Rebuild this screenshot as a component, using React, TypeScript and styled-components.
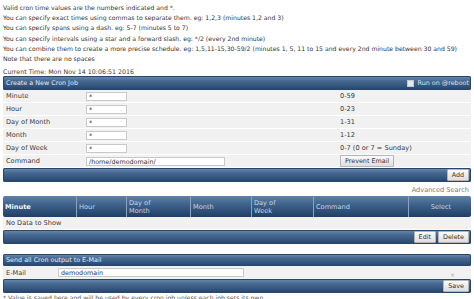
import React from "react";
import styled, { createGlobalStyle } from "styled-components";

const GlobalStyle = createGlobalStyle`
  html, body {
    margin: 0;
    padding: 0;
    background: #ffffff;
  }
  body {
    font-family: "DejaVu Sans", Verdana, sans-serif;
    font-size: 6.6px;
    color: #3a3a3a;
    -webkit-font-smoothing: antialiased;
  }
`;

const Page = styled.div`
  padding: 3px 3px 0 3px;
  width: 468px;
  height: 296px;
  overflow: hidden;
`;

const Notes = styled.div`
  font-size: 6.15px;
  line-height: 10.2px;
  margin-bottom: 3px;
  white-space: nowrap;
  color: #333;
`;

const CurrentTime = styled.div`
  font-size: 6.3px;
  line-height: 9px;
`;

const Bar = styled.div<{ $h?: number }>`
  display: flex;
  align-items: center;
  justify-content: space-between;
  height: ${(p) => p.$h ?? 14}px;
  padding: 0 2px 0 3px;
  color: #e3ebf4;
  border-radius: 2px;
  background: linear-gradient(
    #6c8db3 0%,
    #46688f 35%,
    #3a5c84 60%,
    #23426a 100%
  );
  box-shadow: inset 0 0 0 1px #2a466b;
`;

const BarTitle = styled.span`
  font-size: 6.4px;
`;

const Reboot = styled.label`
  display: flex;
  align-items: center;
  gap: 4px;
  font-size: 6.4px;
  color: #d7e2ee;
`;

const Check = styled.span`
  width: 5px;
  height: 5px;
  background: #e8e8e8;
  border: 1px solid #c8c8c8;
`;

const FormTable = styled.div`
  display: grid;
  grid-template-columns: 80px 254px 1fr;
`;

const Cell = styled.div`
  display: flex;
  align-items: center;
  height: 12px;
  padding-left: 3px;
  background: #f1f1f1;
  border-bottom: 1px solid #ffffff;
`;

const Field = styled.div<{ $w: number }>`
  width: ${(p) => p.$w}px;
  height: 9px;
  background: #ffffff;
  border: 1px solid #c9c9c9;
  line-height: 8px;
  padding-left: 2px;
  box-sizing: border-box;
  color: #333;
  font-size: 6.4px;
`;

const Btn = styled.span`
  display: inline-flex;
  align-items: center;
  justify-content: center;
  height: 10px;
  padding: 0 4px;
  font-size: 6.4px;
  color: #333;
  background: linear-gradient(#fafafa, #dedede);
  border: 1px solid #b5b5b5;
  border-radius: 1px;
`;

const BtnGroup = styled.div`
  display: flex;
  gap: 2px;
`;

const Advanced = styled.div`
  text-align: right;
  color: #7a7a7a;
  padding: 4px 2px 0 0;
  height: 9px;
  line-height: 9px;
  margin-bottom: 1px;
`;

const JobsHead = styled.div`
  display: grid;
  grid-template-columns: 74px 50px 64px 61px 62px 95px 1fr;
  height: 21px;
  border-radius: 2px;
  overflow: hidden;
`;

const HeadCell = styled.div<{ $bold?: boolean; $center?: boolean }>`
  display: flex;
  align-items: center;
  justify-content: ${(p) => (p.$center ? "center" : "flex-start")};
  padding-left: 2px;
  line-height: 8px;
  color: ${(p) => (p.$bold ? "#f2f6fa" : "#c9d7e6")};
  font-weight: ${(p) => (p.$bold ? "bold" : "normal")};
  background: linear-gradient(
    #5f81a8 0%,
    #3f638c 40%,
    #34567f 60%,
    #203f66 100%
  );
  border-right: 1px solid #8aa3bf;
  &:last-child {
    border-right: none;
  }
`;

const EmptyRow = styled.div`
  height: 12px;
  line-height: 12px;
  padding-left: 3px;
  background: #f1f1f1;
  margin-bottom: 1px;
`;

const Gap = styled.div<{ $h: number }>`
  height: ${(p) => p.$h}px;
`;

const MailRow = styled.div`
  display: grid;
  grid-template-columns: 52px 1fr;
  height: 13px;
  background: #f1f1f1;
  align-items: center;
  padding-left: 3px;
  position: relative;
`;

const Clear = styled.span`
  position: absolute;
  right: 16px;
  top: 5px;
  font-size: 6px;
  color: #aaa;
`;

const Footnote = styled.div`
  font-size: 6.15px;
  color: #555;
  padding-top: 1px;
  white-space: nowrap;
`;

const rows = [
  { label: "Minute", range: "0-59" },
  { label: "Hour", range: "0-23" },
  { label: "Day of Month", range: "1-31" },
  { label: "Month", range: "1-12" },
  { label: "Day of Week", range: "0-7 (0 or 7 = Sunday)" },
];

export default function App() {
  return (
    <>
      <GlobalStyle />
      <Page>
        <Notes>
          <div>Valid cron time values are the numbers indicated and *.</div>
          <div>
            You can specify exact times using commas to separate them. eg: 1,2,3
            (minutes 1,2 and 3)
          </div>
          <div>You can specify spans using a dash. eg: 5-7 (minutes 5 to 7)</div>
          <div>
            You can specify intervals using a star and a forward slash. eg: */2
            (every 2nd minute)
          </div>
          <div>
            You can combine them to create a more precise schedule. eg:
            1,5,11-15,30-59/2 (minutes 1, 5, 11 to 15 and every 2nd minute
            between 30 and 59)
          </div>
          <div>Note that there are no spaces</div>
        </Notes>
        <CurrentTime>Current Time: Mon Nov 14 10:06:51 2016</CurrentTime>

        <Bar>
          <BarTitle>Create a New Cron Job</BarTitle>
          <Reboot>
            <Check />
            Run on @reboot
          </Reboot>
        </Bar>
        <FormTable>
          {rows.map((r) => (
            <React.Fragment key={r.label}>
              <Cell>{r.label}</Cell>
              <Cell>
                <Field $w={41}>*</Field>
              </Cell>
              <Cell>{r.range}</Cell>
            </React.Fragment>
          ))}
          <Cell>Command</Cell>
          <Cell>
            <Field $w={139}>/home/demodomain/</Field>
          </Cell>
          <Cell>
            <Btn>Prevent Email</Btn>
          </Cell>
        </FormTable>
        <Bar>
          <span />
          <Btn>Add</Btn>
        </Bar>

        <Advanced>Advanced Search</Advanced>

        <JobsHead>
          <HeadCell $bold>Minute</HeadCell>
          <HeadCell>Hour</HeadCell>
          <HeadCell>
            Day of
            <br />
            Month
          </HeadCell>
          <HeadCell>Month</HeadCell>
          <HeadCell>
            Day of
            <br />
            Week
          </HeadCell>
          <HeadCell>Command</HeadCell>
          <HeadCell $center>Select</HeadCell>
        </JobsHead>
        <EmptyRow>No Data to Show</EmptyRow>
        <Bar>
          <span />
          <BtnGroup>
            <Btn>Edit</Btn>
            <Btn>Delete</Btn>
          </BtnGroup>
        </Bar>

        <Gap $h={10} />
        <Bar $h={12}>
          <BarTitle>Send all Cron output to E-Mail</BarTitle>
        </Bar>
        <MailRow>
          <span>E-Mail</span>
          <Field $w={186}>demodomain</Field>
          <Clear>×</Clear>
        </MailRow>
        <Bar>
          <span />
          <Btn>Save</Btn>
        </Bar>
        <Footnote>
          * Value is saved here and will be used by every cron job unless each job sets its own
        </Footnote>
      </Page>
    </>
  );
}
